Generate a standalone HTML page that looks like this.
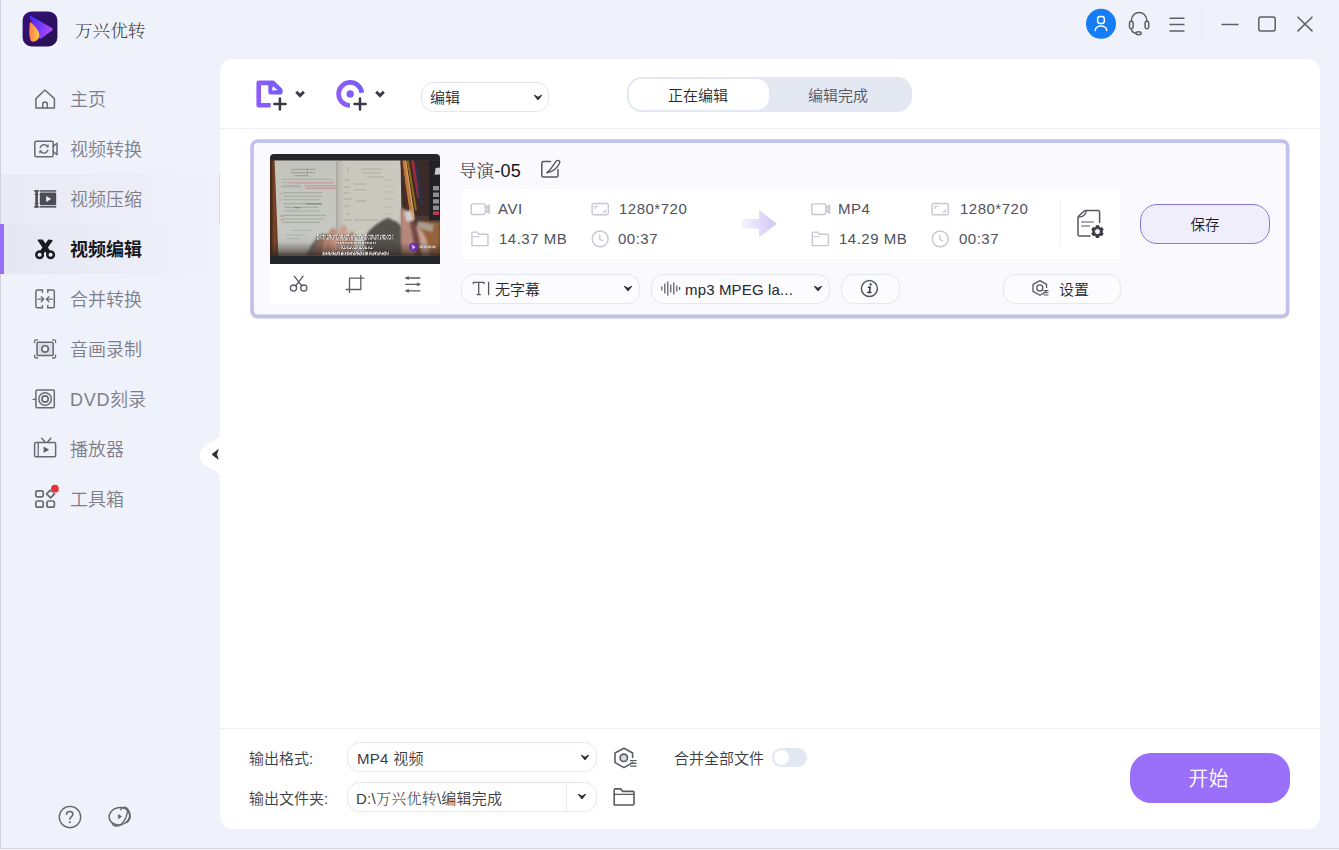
<!DOCTYPE html>
<html lang="zh-CN">
<head>
<meta charset="utf-8">
<title>万兴优转</title>
<style>
*{box-sizing:border-box;margin:0;padding:0}
html,body{width:1339px;height:850px;overflow:hidden}
body{background:#f0f2fb;font-family:"Liberation Sans","Noto Sans CJK SC",sans-serif;color:#2b2b33;position:relative;font-weight:350}
.abs{position:absolute}
svg{position:absolute;overflow:visible}
.t{position:absolute;white-space:nowrap;line-height:20px;height:20px;font-size:15px}
.serif{font-family:"Liberation Sans","Noto Serif CJK SC",serif}
.cj{font-family:"Noto Serif CJK SC",serif}
/* window frame */
#frameL{left:0;top:0;width:1px;height:849px;background:#d0d1dc}
#frameB{left:0;top:848px;width:1339px;height:1px;background:#d0d1d9}
#frameB2{left:0;top:849px;width:1339px;height:1px;background:#fbfbfd}
/* sidebar */
.nav{position:absolute;left:0;width:220px;height:50px}
.nav .lbl{position:absolute;left:70px;top:16px;font-size:18px;line-height:20px;color:#7d7f8a;white-space:nowrap}
.nav.hover{background:linear-gradient(90deg,#e8eaf4 0%,#ecedf7 55%,#f0f1fa 100%)}
.nav.hover:after{content:"";position:absolute;left:219px;top:0;width:1px;height:50px;background:#d6d6ee}
.nav.hover:before{content:"";position:absolute;left:0;top:0;width:1px;height:50px;background:#cfd0dc}
.nav.active{background:linear-gradient(90deg,#e5e8f3 0%,#eaecf6 55%,#f0f2fb 100%)}
.nav.active .lbl{color:#17171f;font-weight:700}
.nav.active:before{content:"";position:absolute;left:0;top:0;width:4px;height:50px;background:#9a6ff8}
/* main panel */
#panel{left:220px;top:59px;width:1100px;height:770px;background:#fff;border-radius:13px}
.hr{position:absolute;left:220px;width:1100px;height:1px;background:#eeeff3}
.pill{position:absolute;border:1px solid #e5e7ef;border-radius:12.5px;background:#fff;height:30px}
.info{color:#50515b;font-size:15px;letter-spacing:.5px;margin-top:.4px}
</style>
</head>
<body>
<div class="abs" id="frameL"></div>
<div class="abs" id="frameB"></div>
<div class="abs" id="frameB2"></div>

<!-- SIDEBAR -->
<div id="sidebar">
<svg width="36" height="36" viewBox="0 0 36 36" style="left:22px;top:11px">
<defs>
<linearGradient id="lgBg" x1="0" y1="0" x2="1" y2="1"><stop offset="0" stop-color="#34127c"/><stop offset="1" stop-color="#26104f"/></linearGradient>
<linearGradient id="lgTri" x1="0" y1="0" x2="1" y2="0.3"><stop offset="0" stop-color="#4a2ef6"/><stop offset=".5" stop-color="#6f38fa"/><stop offset="1" stop-color="#b04af6"/></linearGradient>
<linearGradient id="lgFl" x1="0" y1="0" x2="1" y2="0"><stop offset="0" stop-color="#ff7e48"/><stop offset="1" stop-color="#ffc94c"/></linearGradient>
</defs>
<rect x="0.6" y="0.4" width="34.8" height="35" rx="9" fill="url(#lgBg)"/>
<path d="M7.8 6.4 Q7.4 4.4 9.4 5.2 L30 16.9 Q31.8 18.2 30 19.5 L19.2 27.6 Q17.6 28.6 16.8 27 Z" fill="url(#lgTri)"/>
<path d="M8.3 10.6 C12 15 18 19.6 17.3 25 C16.6 29.6 12 31.6 9.2 30.2 C6.8 26.6 6.8 17 8.3 10.6 Z" fill="url(#lgFl)"/>
</svg>

<div class="t serif" style="left:75px;top:21px;font-size:17.6px;color:#3a3a42">万兴优转</div>
<div class="nav" style="top:74px"><span class="lbl">主页</span></div>
<div class="nav" style="top:124px"><span class="lbl">视频转换</span></div>
<div class="nav hover" style="top:174px"><span class="lbl">视频压缩</span></div>
<div class="nav active" style="top:224px"><span class="lbl">视频编辑</span></div>
<div class="nav" style="top:274px"><span class="lbl">合并转换</span></div>
<div class="nav" style="top:324px"><span class="lbl">音画录制</span></div>
<div class="nav" style="top:374px"><span class="lbl"><span style="letter-spacing:.7px">DVD</span>刻录</span></div>
<div class="nav" style="top:424px"><span class="lbl">播放器</span></div>
<div class="nav" style="top:474px"><span class="lbl">工具箱</span></div>
<svg width="220" height="850" viewBox="0 0 220 850" style="left:0;top:0" fill="none" stroke="#686a74" stroke-width="1.5" stroke-linejoin="round" stroke-linecap="round">
<!-- home -->
<path d="M35.9 108 V98.6 L44.9 90 L54.4 98.6 V108 Z"/>
<path d="M42.7 108 V104.4 A2.3 2.3 0 0 1 47.3 104.4 V108"/>
<!-- convert -->
<rect x="34.8" y="141.2" width="18.4" height="15.6" rx="1.6"/>
<path d="M53.2 146.4 L57 143.2 V154.8 L53.2 151.6" />
<path d="M40.2 147.6 A4.2 4.2 0 0 1 47.6 146.4" stroke-width="1.4"/>
<path d="M47.8 150.2 A4.2 4.2 0 0 1 40.4 151.4" stroke-width="1.4"/>
<path d="M46.2 146.9 L48.4 147.1 L48.3 144.9 Z M41.8 150.9 L39.6 150.7 L39.7 152.9 Z" fill="#686a74" stroke-width="0.6"/>
<!-- compress (hover, filled) -->
<g stroke="none" fill="#4b4c57">
<rect x="35.3" y="190.2" width="2.6" height="17.4"/>
<rect x="34" y="190.2" width="5.2" height="1.4"/>
<rect x="34" y="206.2" width="5.2" height="1.4"/>
<rect x="34" y="194" width="5.2" height="0.8" opacity=".6"/>
<rect x="34" y="203" width="5.2" height="0.8" opacity=".6"/>
<rect x="39.8" y="190.2" width="16.4" height="1.5"/>
<rect x="39.8" y="206.1" width="16.4" height="1.5"/>
<rect x="39.8" y="192.6" width="16.4" height="12.6" rx="1.2"/>
<path d="M46.2 195.9 L51.2 198.9 L46.2 201.9 Z" fill="#eceef7"/>
</g>
<!-- scissors active -->
<g stroke="#1b1b24" fill="none">
<circle cx="39.6" cy="254.8" r="3.3" stroke-width="2.5"/>
<circle cx="50.6" cy="254.8" r="3.3" stroke-width="2.5"/>
<path d="M38.2 240.2 L42.6 240.2 L50 251.8 L47.2 253.4 Z" fill="#1b1b24" stroke-width="1.2"/>
<path d="M52 240.6 L48.6 240.2 L40.2 251.8 L43 253.4 Z" fill="#1b1b24" stroke-width="1.2"/>
</g>
<!-- merge -->
<path d="M42.4 290 H37.4 Q35.9 290 35.9 291.5 V306.3 Q35.9 307.8 37.4 307.8 H42.4"/>
<path d="M47.8 290 H52.8 Q54.3 290 54.3 291.5 V306.3 Q54.3 307.8 52.8 307.8 H47.8"/>
<path d="M42.4 290 V292.4 M42.4 307.8 V305.4 M47.8 290 V292.4 M47.8 307.8 V305.4" stroke-width="1.4"/>
<path d="M38 299.2 H43.6 M41.2 296.6 L43.8 299.2 L41.2 301.8 M52.2 299.2 H46.6 M49 296.6 L46.4 299.2 L49 301.8" stroke-width="1.3"/>
<!-- record -->
<path d="M34.6 342.6 V341.2 Q34.6 339.8 36 339.8 H37.6 M52.6 339.8 H54.2 Q55.6 339.8 55.6 341.2 V342.6 M55.6 355.2 V356.6 Q55.6 358 54.2 358 H52.6 M37.6 358 H36 Q34.6 358 34.6 356.6 V355.2" stroke-width="1.3"/>
<rect x="37" y="342.2" width="16.2" height="13.4" rx="1.2" fill="#dddfe8"/>
<circle cx="45.1" cy="348.9" r="3.2" fill="#f3f4fa" stroke-width="1.6"/>
<!-- dvd -->
<rect x="35.9" y="390" width="18.4" height="17.8" rx="1.2"/>
<circle cx="45.1" cy="399" r="6.3" stroke-width="1.5"/>
<circle cx="45.1" cy="399" r="3.1" stroke-width="1.7"/>
<path d="M33 399.3 H35.6" stroke-width="1.3"/>
<!-- player -->
<path d="M38.2 442.6 H54.4 Q55.6 442.6 55.6 443.8 V455.6 Q55.6 456.8 54.4 456.8 H36 Q34.6 456.8 34.6 455.4 V444 Q34.6 442.6 36 442.6 Z"/>
<path d="M38.2 442.6 V456.8" stroke-width="1.3"/>
<path d="M41.8 438.2 L45.2 442.2 M50.8 438.2 L47.4 442.2"/>
<path d="M44.2 447.2 L48.6 449.7 L44.2 452.2 Z" fill="#55565f" stroke="#55565f" stroke-width=".6"/>
<!-- toolbox -->
<g stroke-width="1.7">
<rect x="35.8" y="490.8" width="7.4" height="6" rx="1.8"/>
<rect x="35.8" y="501" width="7.4" height="6.2" rx="1.8"/>
<rect x="47" y="501" width="7.4" height="6.2" rx="1.8"/>
<path d="M50.6 489.8 L54.6 493.8 L50.6 497.8 L46.6 493.8 Z" stroke-linejoin="round"/>
</g>
<circle cx="54.9" cy="488.7" r="4.6" fill="#f0f2fb" stroke="none" opacity=".8"/>
<circle cx="54.9" cy="488.7" r="3.9" fill="#e9323b" stroke="none"/>
<!-- help -->
<g stroke="#63656e" stroke-width="1.35">
<circle cx="70" cy="817" r="10.7"/>
<path d="M66.6 814.2 C66.6 810.6 72.9 810.6 72.9 814.2 C72.9 816.6 69.8 816.6 69.8 819.2" stroke-width="1.5"/>
<circle cx="69.8" cy="822.3" r="1" fill="#63656e" stroke="none"/>
<!-- feedback -->
<ellipse cx="119.4" cy="816.2" rx="10.4" ry="8.6" transform="rotate(-12 119.4 816.2)" stroke-width="1.4"/>
<path d="M120.6 809.6 C122.5 806.6 126 806.4 127.3 808.6 C130.6 812.6 131.8 819 126.6 822.6" stroke-width="1.4"/>
<path d="M112.4 823.4 C113 826.6 118.4 827 121.4 824.2" stroke-width="1.4"/>
<path d="M127.6 808.8 C127.8 814.8 125 821.6 120.4 825" stroke-width="1.3"/>
<path d="M118.6 814.6 L121.4 816.6 L118.6 818.6 Z" fill="#55565f" stroke="#55565f" stroke-width=".6"/>
</g>
</svg>

</div>

<!-- MAIN PANEL -->
<div class="abs" id="panel"></div>
<div class="hr" style="top:128px"></div>
<div class="hr" style="top:728px"></div>
<svg width="40" height="60" viewBox="190 425 40 60" style="left:190px;top:425px">
<path d="M220.5 432 C220.5 438.5 213.5 440.5 207.4 444 C202.4 447 200 450.8 200 455.4 C200 460 202.4 463.8 207.4 466.8 C213.5 470.3 220.5 472.3 220.5 479 Z" fill="#fff"/>
<path d="M218.2 449.6 L212 454.4 L218.2 459.2 L216.6 454.4 Z" fill="#2e2e36" stroke="#2e2e36" stroke-width=".8" stroke-linejoin="round"/>
</svg>

<svg width="1339" height="60" viewBox="0 0 1339 60" style="left:0;top:0" fill="none" stroke="#5d5f69" stroke-width="1.5" stroke-linecap="round" stroke-linejoin="round">
<circle cx="1101" cy="23.8" r="15" fill="#167df5" stroke="none"/>
<rect x="1097.6" y="16.6" width="6.8" height="6.8" rx="2.4" stroke="#fff" stroke-width="1.5"/>
<path d="M1095.3 30.4 C1095.3 24.6 1106.7 24.6 1106.7 30.4" stroke="#fff" stroke-width="1.5"/>
<!-- headset -->
<path d="M1131.2 21.5 C1131.2 9.6 1147 9.6 1147 21.5"/>
<rect x="1129.5" y="21.3" width="3.6" height="7.4" rx="1.6"/>
<rect x="1145.1" y="21.3" width="3.6" height="7.4" rx="1.6"/>
<path d="M1131 28.7 C1131.6 31.6 1133.6 33 1136 33.2"/>
<ellipse cx="1138.6" cy="33.3" rx="2.6" ry="1.5"/>
<!-- menu -->
<path d="M1169.5 18.3 H1184.5 M1169.5 24.6 H1184.5 M1169.5 30.9 H1184.5" stroke-linecap="butt"/>
<path d="M1201.5 8 V40" stroke="#e6e8f1" stroke-width="1"/>
<!-- window controls -->
<path d="M1221.5 24.5 H1238.5" stroke-linecap="butt"/>
<rect x="1258.8" y="17" width="16.4" height="14" rx="2"/>
<path d="M1297.5 16.8 L1312.5 31.4 M1312.5 16.8 L1297.5 31.4" stroke-linecap="butt"/>
</svg>

<svg width="160" height="50" viewBox="245 70 160 50" style="left:245px;top:70px" fill="none">
<defs><linearGradient id="gP" x1="0" y1="0" x2="1" y2="0"><stop offset="0" stop-color="#8e5cf9"/><stop offset="1" stop-color="#725ef8"/></linearGradient></defs>
<!-- add file -->
<path d="M270.6 105.2 H258.7 V82.9 H273 L280.3 90.2 V92.2 H270.6 V82.9" stroke="url(#gP)" stroke-width="4.6" stroke-linejoin="round"/>
<path d="M272.3 87.2 L278.2 90 L272.3 90.5 Z" fill="#fff"/>
<path d="M274.4 103.9 H285.6 M279.9 98.4 V109.6" stroke="#3a3a44" stroke-width="2.5" stroke-linecap="round"/>
<path d="M296.3 91.8 L300.1 95.6 L303.9 91.8" stroke="#3a3a44" stroke-width="2.9" stroke-linejoin="miter"/>
<!-- add disc -->
<path d="M361.7 92.8 A11.55 11.55 0 1 0 350 105.5" stroke="url(#gP)" stroke-width="4.7"/>
<circle cx="350.2" cy="93.9" r="3.7" fill="#835cf8"/>
<path d="M354.5 103.9 H365.7 M360 98.4 V109.6" stroke="#3a3a44" stroke-width="2.5" stroke-linecap="round"/>
<path d="M376.2 91.8 L380 95.6 L383.8 91.8" stroke="#3a3a44" stroke-width="2.9" stroke-linejoin="miter"/>
</svg>
<div class="pill" style="left:421px;top:82px;width:128px;border-color:#e2e5ee"></div>
<div class="t" style="left:430px;top:88px;color:#26262e">编辑</div>
<svg width="10" height="8" viewBox="0 0 10 8" style="left:533px;top:93.5px"><path d="M1.6 1.4 L5 5.6 L8.4 1.4 L5 3.4 Z" fill="#2e2e36" stroke="#2e2e36" stroke-width="1.2" stroke-linejoin="round"/></svg>
<!-- tabs -->
<div class="abs" style="left:627px;top:77px;width:285px;height:35px;border-radius:14.5px;background:#e4e8f3"></div>
<div class="abs" style="left:629px;top:79px;width:140px;height:31px;border-radius:12.5px;background:#fff"></div>
<div class="t" style="left:628px;top:85.7px;width:140px;text-align:center;color:#26262e">正在编辑</div>
<div class="t" style="left:768px;top:85.7px;width:140px;text-align:center;color:#55575f">编辑完成</div>

<svg width="1050" height="190" viewBox="245 135 1050 190" style="left:245px;top:135px"><rect x="250.2" y="139.3" width="1039.3" height="179.2" rx="7.5" fill="#c3c0ea"/><rect x="253.9" y="142.9" width="1031.9" height="171.6" rx="4" fill="#f9f9fe"/></svg>
<!-- thumbnail -->
<div class="abs" style="left:270px;top:154px;width:170px;height:150px;border-radius:4px;background:#fff;overflow:hidden">
<svg width="170" height="110" viewBox="0 0 170 110" style="left:0;top:0">
<defs>
<filter id="b1" x="-10%" y="-10%" width="120%" height="120%"><feGaussianBlur stdDeviation="0.9"/></filter>
<filter id="b2" x="-20%" y="-20%" width="140%" height="140%"><feGaussianBlur stdDeviation="1.8"/></filter>
<filter id="b05" x="-10%" y="-10%" width="120%" height="120%"><feGaussianBlur stdDeviation="0.45"/></filter>
<linearGradient id="pgL" x1="0" y1="0" x2="0" y2="1"><stop offset="0" stop-color="#c3c4bb"/><stop offset=".75" stop-color="#c6c8c3"/><stop offset="1" stop-color="#b4b3ad"/></linearGradient>
<linearGradient id="pgR" x1="0" y1="0" x2="1" y2="0"><stop offset="0" stop-color="#b6b6ac"/><stop offset=".12" stop-color="#c8c8be"/><stop offset="1" stop-color="#cac9bf"/></linearGradient>
<linearGradient id="btm" x1="0" y1="0" x2="0" y2="1"><stop offset="0" stop-color="#3a2c26" stop-opacity="0"/><stop offset=".6" stop-color="#362822" stop-opacity=".45"/><stop offset="1" stop-color="#2e221c" stop-opacity=".95"/></linearGradient>
<linearGradient id="wood" x1="0" y1="0" x2="1" y2="0"><stop offset="0" stop-color="#3c2116"/><stop offset=".5" stop-color="#7a4529"/><stop offset="1" stop-color="#5a3522"/></linearGradient>
<clipPath id="ph"><rect x="0" y="6.6" width="170" height="95.2"/></clipPath>
</defs>
<rect width="170" height="110" fill="#25262b"/>
<g clip-path="url(#ph)">
<rect x="0" y="6" width="170" height="97" fill="#4a3a32"/>
<!-- left wood strip -->
<rect x="0" y="6" width="9" height="97" fill="url(#wood)"/>
<!-- pages -->
<path d="M4.6 6 H66.6 V103 H8.4 Z" fill="url(#pgL)" filter="url(#b05)"/>
<path d="M66.6 6 H130.6 L132 103 H66.6 Z" fill="url(#pgR)" filter="url(#b05)"/>
<rect x="66" y="6" width="1.6" height="97" fill="#a9a99f" filter="url(#b05)"/>
<!-- faint handwriting lines (left page) -->
<g filter="url(#b05)" stroke-linecap="butt" fill="none">
<path d="M21 15.4 H46 M21 18.6 H45 M25 21.6 H38" stroke="#8c8d88" stroke-width="1.2" opacity=".6"/>
<path d="M37.4 15 V23" stroke="#8c8d88" stroke-width=".8" opacity=".7"/>
<path d="M12 25.4 H62 M12 28.6 H20 M12 31.6 H30" stroke="#a6a6a0" stroke-width="1.1" opacity=".7"/>
<path d="M20 28.8 H64 M34 31.8 H66 M36 34.4 H66" stroke="#c08f92" stroke-width="1.2" opacity=".8"/>
<path d="M11 33 H32 M13 38.6 H52 M13 42.2 H52 M13 45.8 H50 M13 49.6 H52 M14 53.4 H48 M14 57 H50 M12 61.4 H56 M12 65 H54 M12 68.4 H50" stroke="#9c9e9a" stroke-width="1.1" opacity=".7"/>
<path d="M36 49.8 H52 M24 53.6 H30" stroke="#77797a" stroke-width="1.3" opacity=".7"/>
<path d="M10 62 H14 M10 66 H14 M9 40 H12 M9 46 H12" stroke="#c49a92" stroke-width="1.6" opacity=".7"/>
<path d="M20 76.4 H42 M16 81 H36 M17 84.6 H30" stroke="#a9aaa6" stroke-width="1" opacity=".7"/>
<!-- right page -->
<path d="M78 13 V19 M91 15 H112 M92 19 H110 M98 23 H114" stroke="#a4a49c" stroke-width="1" opacity=".7"/>
<path d="M74 26 H80 M74 33 H80 M74 39 H79 M73 45 H82 M74 52 H80 M76 60 H80 M74 66 H82 M84 30 H96 M84 36 H96 M86 47 H96 M84 66 H108" stroke="#9a9a93" stroke-width="1.1" opacity=".7"/>
<path d="M114 26 H124 M116 32 H124 M112 38 H124 M114 45 H124 M114 53 H124 M112 60 H124" stroke="#b0b0a8" stroke-width="1" opacity=".7"/>
</g>
<!-- right dark area, pencils, calculator -->
<path d="M130.4 6 H170 V62 H134 Z" fill="#3b2a2b" filter="url(#b05)"/>
<rect x="159" y="6" width="11" height="60" fill="#232327" filter="url(#b05)"/>
<path d="M165.6 14 L170 13.6 V20.4 L164.6 20.8 Z" fill="#c9c9cd" filter="url(#b05)"/>
<g fill="#8f9094" filter="url(#b05)"><rect x="163" y="32" width="6" height="4.4"/><rect x="163" y="38.6" width="6" height="4.4"/><rect x="163" y="45.2" width="6" height="4.4"/><rect x="163" y="51.6" width="6" height="4.4"/><rect x="163" y="57.4" width="6" height="3.6" fill="#c33a52"/></g>
<g filter="url(#b05)" fill="none">
<path d="M134 6 L143 66" stroke="#b97a3e" stroke-width="4.2"/>
<path d="M135.4 6 L144 62" stroke="#e0a865" stroke-width="1.2" opacity=".8"/>
<path d="M137.6 6 L146 56" stroke="#8a6a1e" stroke-width="2"/>
<path d="M142.4 6 L149 44" stroke="#9c2a3c" stroke-width="3.2"/>
<path d="M146 10 L151 50" stroke="#2c3350" stroke-width="2.6"/>
<path d="M131.6 6 L138 62" stroke="#5a2f24" stroke-width="1.6"/>
</g>
<!-- desk at right -->
<path d="M152 68 H170 V103 H146 Z" fill="#96643a" filter="url(#b1)"/>
<path d="M148 67 L164 70.5 L162.4 78 L146.4 74 Z" fill="#a89c8a" filter="url(#b1)"/>
<!-- shadow of hand -->
<path d="M96 103 C93 90 95 80 101 75 C106 70 112 66 118 64 C121 64 122 67 125 67 C128 68 130 71 133 74 L137 103 Z" fill="#54514d" filter="url(#b1)"/>
<path d="M36 103 C39 93 44 86 50 81 C53 79 56 80 58 82 L60 103 Z" fill="#6b6964" filter="url(#b1)"/>
<!-- left hand fingers -->
<g filter="url(#b1)">
<path d="M44 103 C45 93 48 84 54 81 C58 80 59 88 57 103 Z" fill="#8f6a58"/>
<path d="M52 103 C53 88 57 77 63 74 C68 73 68 86 65 103 Z" fill="#b98c76"/>
<path d="M62 103 C64 86 68 73 74 71 C79 71 78 86 75 103 Z" fill="#c9a08e"/>
<path d="M72 103 C74 90 77 79 82 77 C86 78 85 90 83 103 Z" fill="#b58c7c"/>
<path d="M57 103 L58.4 86 M67.4 103 L68.6 82" stroke="#7a5648" stroke-width="1" fill="none" opacity=".7"/>
</g>
<!-- right hand -->
<g filter="url(#b1)">
<path d="M131 54 C136 54 141 60 143 66 C147 76 150 90 152 103 H132 C131 90 130 70 131 54 Z" fill="#b4887c"/>
<path d="M137 58 C141 62 146 70 150 80 C153 88 156 96 157 103 H146 C144 90 141 72 137 58 Z" fill="#76463f"/>
<path d="M146 72 C152 74 158 84 160 103 H152 C151 92 149 80 146 72 Z" fill="#c4a093"/>
<path d="M134 58 L141 56 L144 66 L137 68 Z" fill="#d4cec8"/>
</g>
<!-- bottom darkening -->
<rect x="0" y="88" width="170" height="15" fill="url(#btm)"/>
<!-- watermark -->
<circle cx="143.4" cy="92.8" r="4.4" fill="#6a2fb4" filter="url(#b05)" opacity=".9"/>
<path d="M141.8 90.4 L145.6 93 L142.6 95.4 Z" fill="#e2bdfd" filter="url(#b05)"/>
<g fill="#d6d1cd" filter="url(#b05)" opacity=".75"><rect x="149.6" y="91.6" width="3.4" height="2.6"/><rect x="153.8" y="91.6" width="3.4" height="2.6"/><rect x="158" y="91.6" width="3.4" height="2.6"/><rect x="162.2" y="91.6" width="3.4" height="2.6"/></g>
<!-- caption strokes (blurred, illegible in source) -->
<g filter="url(#b05)" fill="none">
<g stroke="#2a2826" opacity=".38" stroke-width="5">
<path d="M46 83 H124"/><path d="M67 89 H106.6" stroke-width="3.4"/><path d="M70.6 93.8 H104" stroke-width="3.4"/><path d="M52 99.2 H119.6" stroke-width="4"/>
</g>
<g stroke="#fff" opacity=".88">
<path d="M46.6 81.4 H123.4" stroke-width="1.3" stroke-dasharray="2.4 1.4 1.2 .8 3 1.6 .8 .8"/>
<path d="M47 83.1 H123" stroke-width="1.2" stroke-dasharray="1 .9 2.6 1.2 1.6 1 .8 1.4"/>
<path d="M46.6 84.8 H123.4" stroke-width="1.2" stroke-dasharray="2.8 1.2 1 1 2 1.5"/>
<path d="M67.4 88.4 H106" stroke-width="1" stroke-dasharray="1.8 1 1 .8 2.4 1.2"/>
<path d="M67.8 89.7 H105.6" stroke-width="1" stroke-dasharray="1 1 2.2 1.2 1.2 .8"/>
<path d="M71 93.1 H103.6" stroke-width="1" stroke-dasharray="2 1 1.2 1 2.6 1.2"/>
<path d="M71.4 94.5 H103.2" stroke-width="1" stroke-dasharray="1 .8 2.4 1.2"/>
<path d="M52.4 98.2 H119" stroke-width="1.1" stroke-dasharray="2.2 1.2 1 .8 2.8 1.4"/>
<path d="M52.8 99.6 H118.6" stroke-width="1.1" stroke-dasharray="1 1 2.6 1.2 1.4 .9"/>
<path d="M52.4 100.8 H119" stroke-width="1" stroke-dasharray="2.6 1.3 1.2 1"/>
</g>
</g>
</g>
</svg>

</div>
<svg width="170" height="40" viewBox="270 264 170 40" style="left:270px;top:264px" fill="none" stroke="#5a5b64" stroke-width="1.3" stroke-linecap="round" stroke-linejoin="round">
<!-- scissors -->
<circle cx="293.5" cy="288.1" r="3.1"/><circle cx="303.8" cy="288.1" r="3.1"/>
<path d="M294.3 276.2 L301.8 286 M303.1 276.2 L295.6 286"/>
<!-- crop -->
<path d="M349.5 292.5 V278.2 H363.7 M360.8 275.4 V289.5 H346.2"/>
<!-- adjust -->
<path d="M405.4 278 H420.4 M405.4 284.4 H420.4 M405.4 290.8 H420.4" stroke-linecap="butt"/>
<path d="M408.2 276.6 L405.8 278 L408.2 279.4 Z M417.6 283 L420 284.4 L417.6 285.8 Z M408.2 289.4 L405.8 290.8 L408.2 292.2 Z" fill="#5a5b64" stroke-width=".7"/>
</svg>
<!-- title -->
<div class="t" style="left:459px;top:160px;font-size:18px;color:#1f1f27"><span class="cj" style="font-size:17.6px;color:#33333b">导演</span><span style="letter-spacing:.3px;color:#15151c">-05</span></div>
<svg width="24" height="22" viewBox="538 157 24 22" style="left:538px;top:157px" fill="none" stroke="#55565f" stroke-width="1.5" stroke-linecap="round" stroke-linejoin="round">
<path d="M550.4 161.6 H543.4 Q541.8 161.6 541.8 163.2 V175.4 Q541.8 177 543.4 177 H556.4 Q558 177 558 175.4 V169.4"/>
<path d="M546.8 172.8 C550 170.8 553 166 556 161.4 C557.4 159.4 560.6 160.6 559.6 163 C557.6 167.6 553.4 171.6 546.8 172.8 Z" stroke-width="1.4"/>
</svg>
<!-- info box -->
<div class="abs" style="left:461px;top:189px;width:659px;height:70px;background:#fff;border-radius:3px"></div>
<svg width="660" height="70" viewBox="461 189 660 70" style="left:461px;top:189px" fill="none" stroke="#c6c8d1" stroke-width="1.4" stroke-linejoin="round" stroke-linecap="round">
<defs>
<linearGradient id="gA" x1="0" y1="0" x2="1" y2="0"><stop offset="0" stop-color="#f5f3fe"/><stop offset=".5" stop-color="#e3dcfa"/><stop offset="1" stop-color="#d0c5f5"/></linearGradient>
</defs>
<g transform="translate(470.6 203.2)"><rect x="0.7" y="0.7" width="14" height="10.6" rx="1.4"/><path d="M14.7 4.4 L18.6 2 V10 L14.7 7.6" fill="#d7d9e0"/></g>
<g transform="translate(471.2 231.4)"><path d="M0.7 14.2 V1.8 Q0.7 0.7 1.8 0.7 H6 L7.8 2.8 H15.6 Q16.8 2.8 16.8 4 V13 Q16.8 14.2 15.6 14.2 Z"/><path d="M0.7 5.4 H8" stroke-width="1.1"/></g>
<g transform="translate(591.4 202.8)"><rect x="0.7" y="0.7" width="16.2" height="11.2" rx="1.4"/><path d="M3.6 5.6 V3.6 H6 M14 7 V9 H11.6" stroke-width="1.2"/></g>
<g transform="translate(591.6 230.3)"><circle cx="8.6" cy="8.6" r="7.9"/><path d="M8.2 4.8 V9 L11 10.6" stroke-width="1.3"/></g>
<g transform="translate(811 203.2)"><rect x="0.7" y="0.7" width="14" height="10.6" rx="1.4"/><path d="M14.7 4.4 L18.6 2 V10 L14.7 7.6" fill="#d7d9e0"/></g>
<g transform="translate(811.6 231.4)"><path d="M0.7 14.2 V1.8 Q0.7 0.7 1.8 0.7 H6 L7.8 2.8 H15.6 Q16.8 2.8 16.8 4 V13 Q16.8 14.2 15.6 14.2 Z"/><path d="M0.7 5.4 H8" stroke-width="1.1"/></g>
<g transform="translate(931.4 202.8)"><rect x="0.7" y="0.7" width="16.2" height="11.2" rx="1.4"/><path d="M3.6 5.6 V3.6 H6 M14 7 V9 H11.6" stroke-width="1.2"/></g>
<g transform="translate(931.6 230.3)"><circle cx="8.6" cy="8.6" r="7.9"/><path d="M8.2 4.8 V9 L11 10.6" stroke-width="1.3"/></g>
<path d="M742 219 H759 V209.8 L776.6 223.7 L759 237.6 V228.4 H742 Z" fill="url(#gA)" stroke="none"/>
<path d="M1060.5 200 V245" stroke="#eeeff4" stroke-width="1"/>
<!-- doc settings -->
<g stroke="#55565f" stroke-width="1.5">
<path d="M1090 236 H1079.6 Q1078 236 1078 234.4 V217.8 Q1078 216.8 1078.8 216 L1084.2 211 Q1085 210.4 1086.2 210.4 H1098 Q1099.6 210.4 1099.6 212 V222.4"/>
<path d="M1078.6 217.2 C1082.6 217 1085.8 215 1086.2 210.8" stroke-width="1.3"/>
<path d="M1081.6 222 H1093.4 M1081.6 226 H1089.6" stroke-width="1.1"/>
</g>
<path d="M1095.95 227.16 L1096.25 225.73 L1098.75 225.73 L1099.05 227.16 L1100.57 228.04 L1101.96 227.59 L1103.21 229.75 L1102.12 230.72 L1102.12 232.48 L1103.21 233.45 L1101.96 235.61 L1100.57 235.16 L1099.05 236.04 L1098.75 237.47 L1096.25 237.47 L1095.95 236.04 L1094.43 235.16 L1093.04 235.61 L1091.79 233.45 L1092.88 232.48 L1092.88 230.72 L1091.79 229.75 L1093.04 227.59 L1094.43 228.04 Z M1100.5 231.6 A3 3 0 1 0 1094.5 231.6 A3 3 0 1 0 1100.5 231.6 Z" fill="#3a3a43" stroke="#3a3a43" stroke-width="1" stroke-linejoin="round" fill-rule="evenodd"/>
</svg>
<div class="t info" style="left:498px;top:199px">AVI</div>
<div class="t info" style="left:499px;top:229px">14.37 MB</div>
<div class="t info" style="left:619px;top:199px">1280*720</div>
<div class="t info" style="left:618px;top:229px">00:37</div>
<div class="t info" style="left:838px;top:199px">MP4</div>
<div class="t info" style="left:839px;top:229px">14.29 MB</div>
<div class="t info" style="left:960px;top:199px">1280*720</div>
<div class="t info" style="left:959px;top:229px">00:37</div>
<!-- save -->
<div class="abs" style="left:1140px;top:204px;width:130px;height:40px;border-radius:17px;background:#f1eefc;border:1px solid #8d78d8"></div>
<div class="t" style="left:1140px;top:215px;width:130px;text-align:center;color:#1c1c24;font-size:14.5px">保存</div>
<!-- dropdown row -->
<div class="pill" style="background:#fcfcff;left:460.5px;top:274px;width:179px"></div>
<div class="pill" style="background:#fcfcff;left:650.5px;top:274px;width:179px"></div>
<div class="pill" style="background:#fcfcff;left:840.5px;top:274px;width:59px"></div>
<div class="pill" style="background:#fcfcff;left:1003px;top:274px;width:118px"></div>
<svg width="660" height="30" viewBox="461 274 660 30" style="left:461px;top:274px" fill="none" stroke="#55565f" stroke-width="1.3" stroke-linecap="round" stroke-linejoin="round">
<!-- T| icon -->
<path d="M473.4 284.2 V282.4 H484 V284.2 M478.7 282.4 V294.6 M476.6 294.6 H480.8 M488.6 281.8 V295.2" stroke-linecap="butt"/>
<!-- wave icon -->
<path d="M661.8 286.6 V290.4 M664.8 283.4 V293.6 M667.8 281.4 V295.6 M670.8 284.6 V292.4 M673.8 282.6 V294.4 M676.8 285.4 V291.6 M679.6 287 V290" stroke-width="1.2" stroke-linecap="butt"/>
<!-- info -->
<circle cx="869.4" cy="288.6" r="8" stroke-width="1.5"/>
<path d="M870.3 287.2 L869.3 292.4 M868.4 287.3 H870.3 M867.8 292.5 H871" stroke-width="1.6" stroke="#3c3d45"/>
<circle cx="870.6" cy="284.5" r="1.15" fill="#3c3d45" stroke="none"/>
<!-- settings hex -->
<path d="M1046 291.8 L1040 295.2 L1033 291.4 V284.4 L1040 280.6 L1046.6 284.4 V287.4"/>
<circle cx="1039.8" cy="287.9" r="3"/>
<path d="M1043.6 290.6 H1048.4 M1043.6 292.8 H1048.4 M1043.6 295 H1048.4" stroke-width="1.1" stroke-linecap="butt"/>
</svg>
<div class="t" style="left:495px;top:280px;color:#26262e">无字幕</div>
<svg width="10" height="8" viewBox="0 0 10 8" style="left:622.7px;top:285px"><path d="M1.6 1.4 L5 5.6 L8.4 1.4 L5 3.4 Z" fill="#2e2e36" stroke="#2e2e36" stroke-width="1.2" stroke-linejoin="round"/></svg>
<div class="t" style="left:685px;top:279.5px;color:#26262e;letter-spacing:.15px">mp3 MPEG la...</div>
<svg width="10" height="8" viewBox="0 0 10 8" style="left:812.9px;top:285px"><path d="M1.6 1.4 L5 5.6 L8.4 1.4 L5 3.4 Z" fill="#2e2e36" stroke="#2e2e36" stroke-width="1.2" stroke-linejoin="round"/></svg>
<div class="t" style="left:1059px;top:280px;color:#26262e">设置</div>

<div class="t" style="left:249px;top:749px;color:#3c3d45">输出格式:</div>
<div class="t" style="left:249px;top:789px;color:#3c3d45">输出文件夹:</div>
<div class="pill" style="left:347px;top:742px;width:249.5px"></div>
<div class="t" style="left:357px;top:749px;color:#3a3b43;letter-spacing:.3px">MP4 视频</div>
<svg width="10" height="8" viewBox="0 0 10 8" style="left:579.7px;top:753.5px"><path d="M1.6 1.4 L5 5.6 L8.4 1.4 L5 3.4 Z" fill="#2e2e36" stroke="#2e2e36" stroke-width="1.2" stroke-linejoin="round"/></svg>
<div class="pill" style="left:347px;top:782px;width:249.5px"></div>
<div class="abs" style="left:565.5px;top:783px;width:1px;height:28px;background:#eaebf1"></div>
<div class="t" style="left:356px;top:788px;color:#3a3b43;letter-spacing:.25px">D:\<span class="cj">万兴优转</span>\编辑完成</div>
<svg width="10" height="8" viewBox="0 0 10 8" style="left:577.3px;top:793px"><path d="M1.6 1.4 L5 5.6 L8.4 1.4 L5 3.4 Z" fill="#2e2e36" stroke="#2e2e36" stroke-width="1.2" stroke-linejoin="round"/></svg>
<svg width="40" height="70" viewBox="605 740 40 70" style="left:605px;top:740px" fill="none" stroke="#5a5b64" stroke-width="1.6" stroke-linejoin="round" stroke-linecap="round">
<!-- hex settings -->
<path d="M632.6 762.6 L624 767.6 L615 762.6 V753 L624 748.2 L632.6 753 V757.4"/>
<circle cx="623.8" cy="757.8" r="3.7" fill="#d9dbe3"/>
<path d="M630 760.6 H636.6 M630 763.4 H636.6 M630 766.2 H636.6" stroke-width="1.2" stroke-linecap="butt"/>
<!-- folder -->
<path d="M614.2 805 V790 Q614.2 788.9 615.3 788.9 H620.6 L622.8 791.4 H632.8 Q634 791.4 634 792.6 V803.8 Q634 805 632.8 805 Z"/>
<path d="M614.2 794.4 H634" stroke-width="1.3"/>
</svg>
<div class="t" style="left:674px;top:749px;color:#3c3d45">合并全部文件</div>
<div class="abs" style="left:772px;top:748px;width:35px;height:19px;border-radius:9.5px;background:#e3e7f2"></div>
<div class="abs" style="left:774px;top:750px;width:15px;height:15px;border-radius:50%;background:#fff"></div>
<div class="abs" style="left:1130px;top:753px;width:160px;height:50px;border-radius:21px;background:#9a6ff9"></div>
<div class="t" style="left:1128.5px;top:766.5px;width:160px;text-align:center;font-size:20px;line-height:24px;height:24px;color:#fff">开始</div>

</body>
</html>
